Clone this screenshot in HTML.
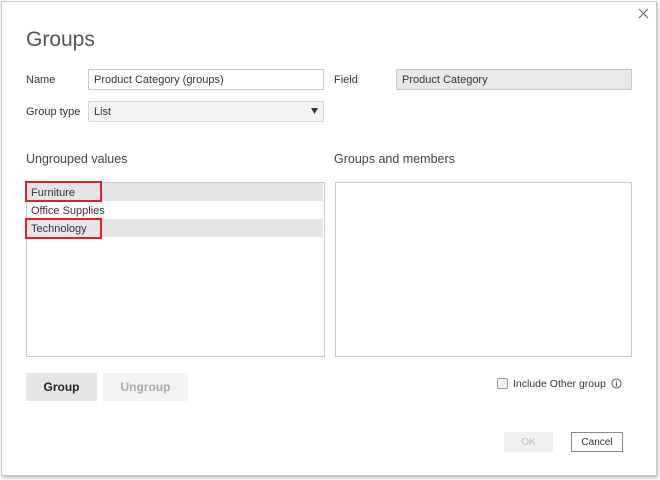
<!DOCTYPE html>
<html><head><style>
*{margin:0;padding:0;box-sizing:border-box}
body{width:660px;height:480px;background:#fff;font-family:"Segoe UI","Liberation Sans",sans-serif;position:relative;overflow:hidden;color:#333}
.dlg{position:absolute;left:1px;top:1px;width:656px;height:475px;border:1px solid #c8c8c8;box-shadow:1px 2px 3px rgba(0,0,0,.25);background:#fff}
.a{position:absolute;white-space:nowrap}
.lbl{font-size:11px;color:#333}
.inp{position:absolute;border:1px solid #c8c8c8;font-size:11px;padding:4px 5px 2px;height:21px;line-height:13px;color:#333}
.row{position:absolute;left:27px;width:296px;height:18px;font-size:11px;padding:3px 4px 1px;line-height:14px}
.red{position:absolute;border:2px solid #e0202a}
</style></head><body>
<div class="dlg"></div>
<div class="a" style="left:26px;top:28px;font-size:21px;color:#555;font-weight:300">Groups</div>
<svg class="a" style="left:638px;top:8px" width="11" height="11"><path d="M1 1L10 10M10 1L1 10" stroke="#666" stroke-width="1.1"/></svg>
<div class="a lbl" style="left:26px;top:74px">Name</div>
<div class="inp" style="left:88px;top:69px;width:236px">Product Category (groups)</div>
<div class="a lbl" style="left:334px;top:74px">Field</div>
<div class="inp" style="left:396px;top:69px;width:236px;background:#e8e8e8">Product Category</div>
<div class="a lbl" style="left:26px;top:106px">Group type</div>
<div class="inp" style="left:88px;top:101px;width:236px;background:#f3f3f3;border-color:#d8d8d8">List</div>
<svg class="a" style="left:311px;top:108px" width="7" height="6"><path d="M0 0H7L3.5 6Z" fill="#333"/></svg>
<div class="a" style="left:26px;top:152px;font-size:12.5px;color:#444">Ungrouped values</div>
<div class="a" style="left:334px;top:152px;font-size:12.5px;color:#444">Groups and members</div>
<div class="a" style="left:26px;top:182px;width:299px;height:175px;border:1px solid #c8c8c8"></div>
<div class="row" style="top:183px;background:#e6e6e6">Furniture</div>
<div class="row" style="top:201px">Office Supplies</div>
<div class="row" style="top:219px;background:#e6e6e6">Technology</div>
<div class="red" style="left:25px;top:181px;width:77px;height:21px"></div>
<div class="red" style="left:25px;top:218px;width:77px;height:21px"></div>
<div class="a" style="left:335px;top:182px;width:297px;height:175px;border:1px solid #c8c8c8"></div>
<div class="a" style="left:26px;top:373px;width:71px;height:28px;background:#e6e6e6;font-size:12px;font-weight:bold;text-align:center;line-height:29px;color:#222">Group</div>
<div class="a" style="left:103px;top:373px;width:85px;height:28px;background:#f3f3f3;font-size:12px;font-weight:bold;text-align:center;line-height:29px;color:#aaa">Ungroup</div>
<div class="a" style="left:497px;top:378px;width:11px;height:11px;border:1px solid #999;border-radius:2px;background:#f3f3f3"></div>
<div class="a" style="left:513px;top:378px;font-size:10.5px;color:#333">Include Other group</div>
<svg class="a" style="left:611px;top:378px" width="11" height="11"><circle cx="5.5" cy="5.5" r="4.6" fill="none" stroke="#555" stroke-width=".9"/><path d="M5.5 4.5V8.5M5.5 2.6V3.5" stroke="#555"/></svg>
<div class="a" style="left:504px;top:432px;width:49px;height:20px;background:#f0f0f0;font-size:10px;color:#bbb;text-align:center;line-height:21px">OK</div>
<div class="a" style="left:571px;top:432px;width:52px;height:20px;border:1px solid #888;font-size:10px;color:#333;text-align:center;line-height:19px">Cancel</div>
</body></html>
